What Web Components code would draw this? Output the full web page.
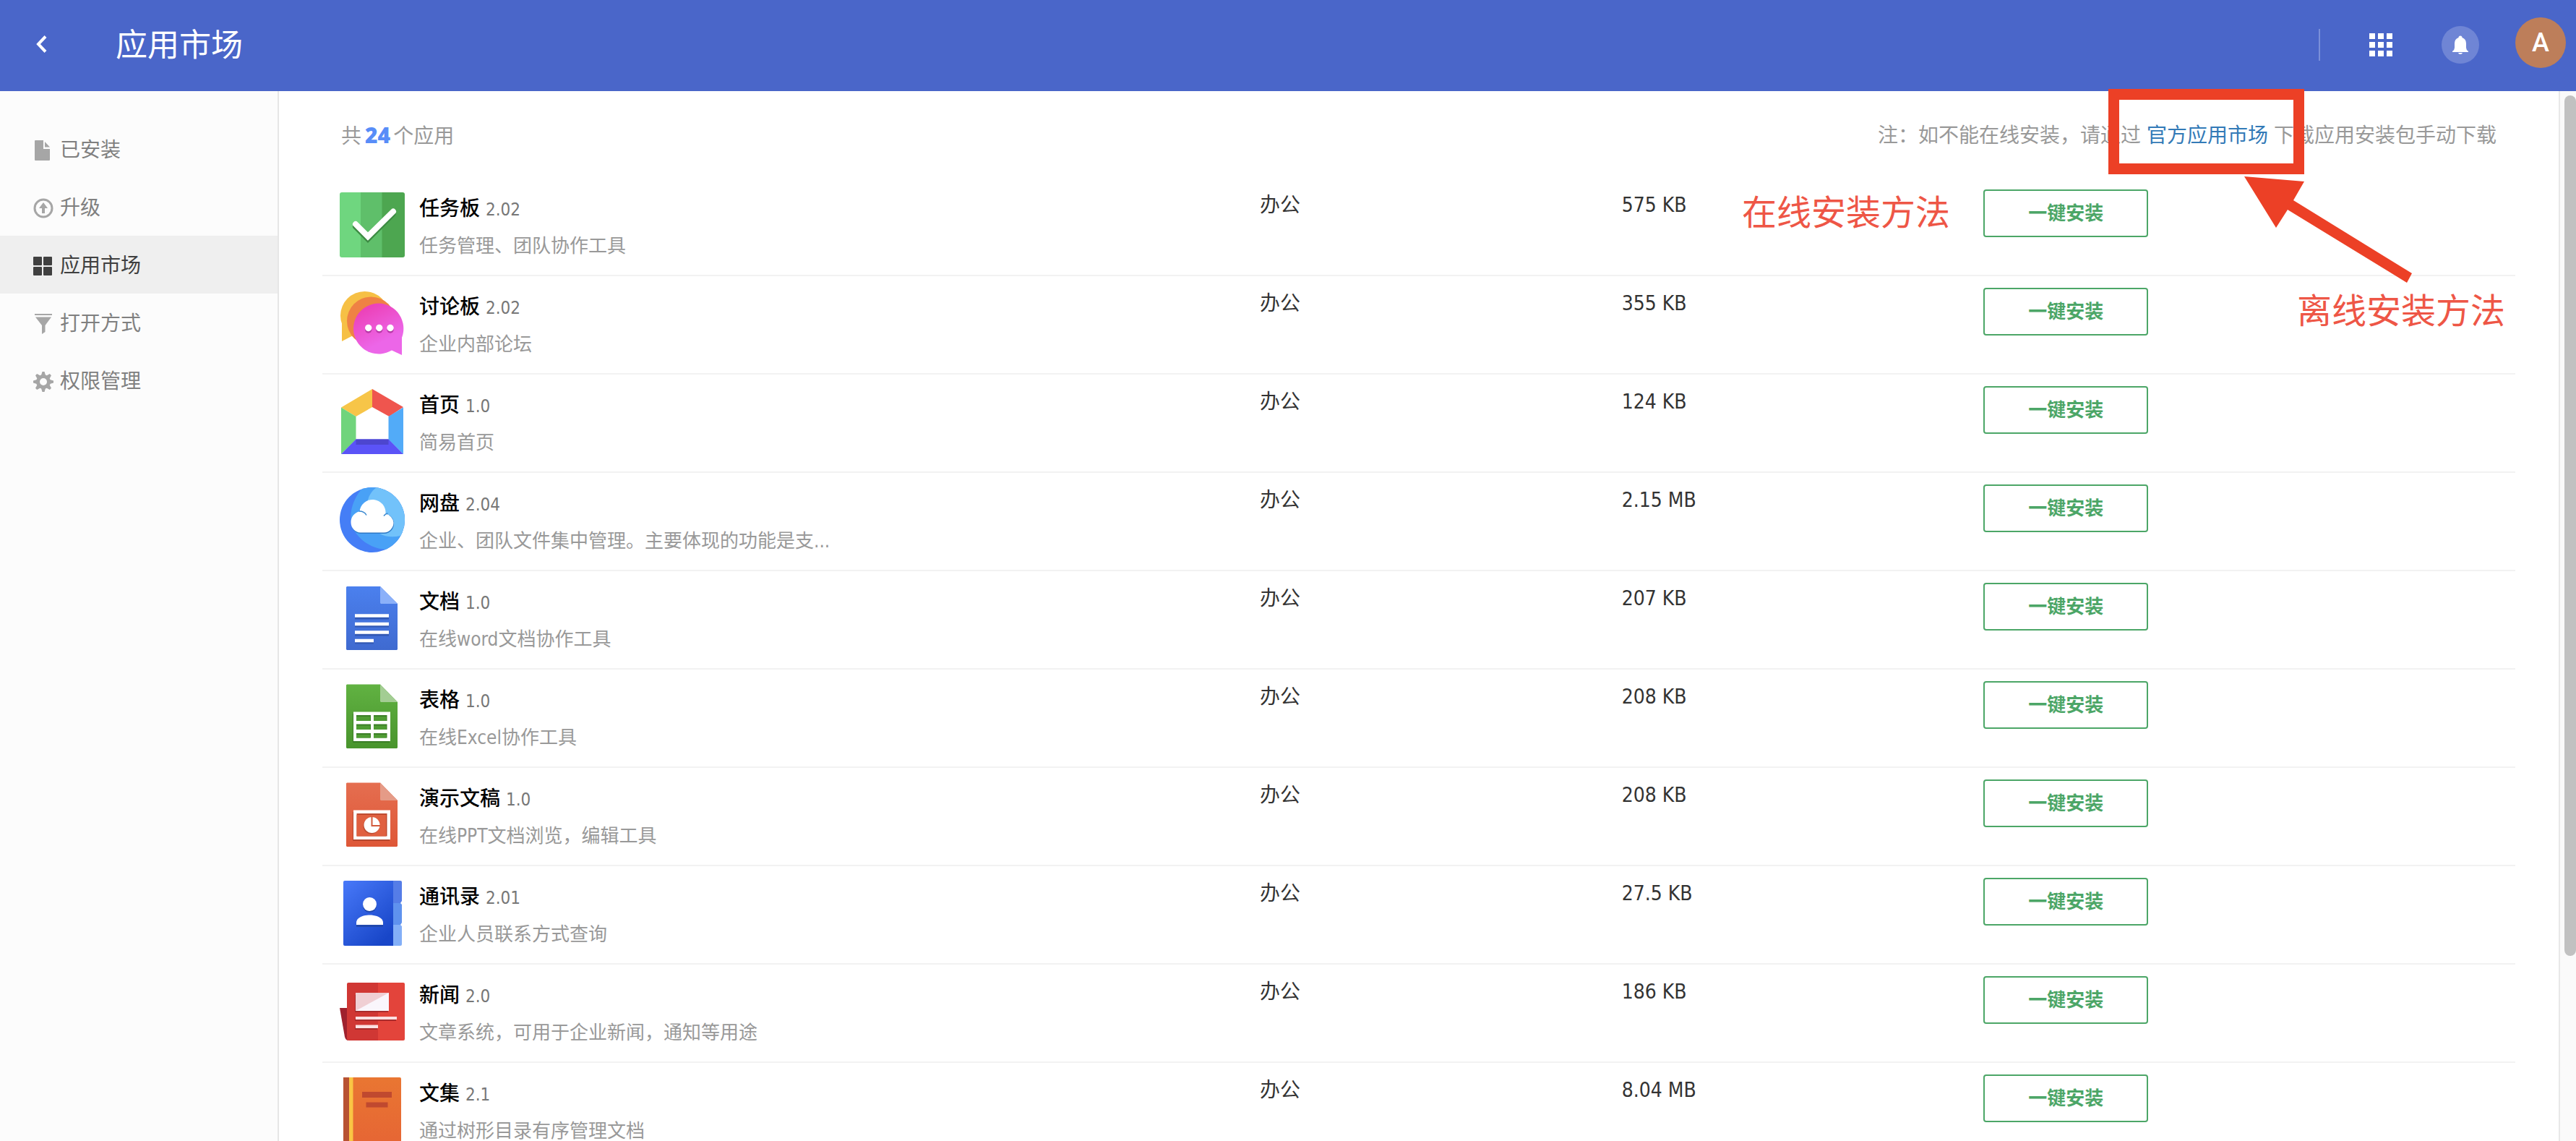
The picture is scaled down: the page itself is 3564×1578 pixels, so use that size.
<!DOCTYPE html>
<html lang="zh-CN">
<head>
<meta charset="utf-8">
<title>应用市场</title>
<style>
  html, body {
    margin: 0;
    height: 100%;
  }
  body {
    font-family: "DejaVu Sans Condensed", "Noto Sans CJK SC", sans-serif;
    font-size: 28px;
    line-height: 40px;
    color: #333;
    background: #fff;
    overflow: hidden;
  }
</style>
</head>
<body>
<market-page>
  <market-header slot="header" heading="应用市场" user="A"></market-header>
  <side-nav slot="nav">
    <side-item icon="file">已安装</side-item>
    <side-item icon="upgrade">升级</side-item>
    <side-item icon="grid" active>应用市场</side-item>
    <side-item icon="filter">打开方式</side-item>
    <side-item icon="gear">权限管理</side-item>
  </side-nav>
  <market-toolbar count="24">
    注：如不能在线安装，请通过 <a href="#market">官方应用市场</a> 下载应用安装包手动下载
  </market-toolbar>
  <app-table></app-table>
  <guide-notes slot="notes"></guide-notes>
</market-page>

<script>
// --- Data ---
const APPS = [
  { icon: 'board', name: '任务板', version: '2.02', desc: '任务管理、团队协作工具', type: '办公', size: '575 KB' },
  { icon: 'forum', name: '讨论板', version: '2.02', desc: '企业内部论坛', type: '办公', size: '355 KB' },
  { icon: 'home', name: '首页', version: '1.0', desc: '简易首页', type: '办公', size: '124 KB' },
  { icon: 'disk', name: '网盘', version: '2.04', desc: '企业、团队文件集中管理。主要体现的功能是支...', type: '办公', size: '2.15 MB' },
  { icon: 'doc', name: '文档', version: '1.0', desc: '在线word文档协作工具', type: '办公', size: '207 KB' },
  { icon: 'sheet', name: '表格', version: '1.0', desc: '在线Excel协作工具', type: '办公', size: '208 KB' },
  { icon: 'slides', name: '演示文稿', version: '1.0', desc: '在线PPT文档浏览，编辑工具', type: '办公', size: '208 KB' },
  { icon: 'contacts', name: '通讯录', version: '2.01', desc: '企业人员联系方式查询', type: '办公', size: '27.5 KB' },
  { icon: 'news', name: '新闻', version: '2.0', desc: '文章系统，可用于企业新闻，通知等用途', type: '办公', size: '186 KB' },
  { icon: 'book', name: '文集', version: '2.1', desc: '通过树形目录有序管理文档', type: '办公', size: '8.04 MB' },
];

// --- App icons, 90 x 90 ---
const APP_ICONS = {
  board: `
    <clipPath id="c"><rect width="90" height="90" rx="3"/></clipPath>
    <g clip-path="url(#c)">
      <rect width="30" height="90" fill="#6fd67f"/>
      <rect x="29" width="30" height="90" fill="#5fbf6a"/>
      <rect x="58.500" width="32" height="90" fill="#4da650"/>
    </g>
    <path d="M21.500 47.500 39 65 74 30" fill="none" stroke="#3c8a42" stroke-width="7" stroke-linecap="round"/>
    <path d="M22 44 39 61 74 26.500" fill="none" stroke="#fff" stroke-width="8" stroke-linecap="round"/>`,
  forum: `
    <linearGradient id="g" x1=".2" y1="0" x2=".7" y2="1">
      <stop offset=".1" stop-color="#ec42b9"/><stop offset=".75" stop-color="#ec66e8"/>
    </linearGradient>
    <circle cx="34.500" cy="34.500" r="33.500" fill="#f6c045"/>
    <path d="M3 70V45L30 40V56z" fill="#f6c045"/>
    <circle cx="43.500" cy="42" r="33.500" fill="#ef8244"/>
    <path d="M54 17.500A35 35 0 0 1 86 65V89L72 82.500A35 35 0 1 1 54 17.500z" fill="url(#g)"/>
    <g fill="#b73aa8"><circle cx="39.700" cy="54" r="4.700"/><circle cx="54.700" cy="54" r="4.700"/><circle cx="70" cy="54" r="4.700"/></g>
    <g fill="#fff"><circle cx="39.700" cy="51.500" r="4.700"/><circle cx="54.700" cy="51.500" r="4.700"/><circle cx="70" cy="51.500" r="4.700"/></g>`,
  home: `
    <path d="M45 0V25L22.500 38 2 25.500z" fill="#f7c548"/>
    <path d="M45 0 88 25 68.500 38 45 25z" fill="#ef554e"/>
    <path d="M2 25.500 22.500 38V70L2 90z" fill="#70d47c"/>
    <path d="M88 25.500 67.500 38V70L88 90z" fill="#52abf8"/>
    <path d="M22.500 69.500H67.500L88 90H2z" fill="#5b53f7"/>
    <path d="M22.500 69.500H67.500V77H22.500z" fill="#4d46cf"/>`,
  disk: `
    <clipPath id="c"><circle cx="45" cy="45" r="45"/></clipPath>
    <g clip-path="url(#c)">
      <rect width="90" height="90" fill="#457ef6"/>
      <path d="M32 0C20 14 14 30 15.500 46 18 66 40 86 66 86L90 90V0z" fill="#49a1f6"/>
      <path d="M51 0C36 10 34 34 42 50 50 66 66 71 84 67L95 60V0z" fill="#72c2fa"/>
    </g>
    <path d="M28.500 64A13.500 14 0 0 1 16 50 14 15 0 0 1 28 36 18 18 0 0 1 63 36.500 14 14 0 0 1 75 50 13.500 14 0 0 1 62 64z" fill="#2d78c6"/>
    <path d="M28.500 62.500A13.500 14 0 0 1 15.500 48.500 14 15 0 0 1 27.500 33.500 18 18 0 0 1 63.500 36.500 14 14 0 0 1 74.500 49 13.500 14 0 0 1 61.500 62.500z" fill="#fff"/>
    <path d="M27 33Q34 33 37 38.500M66.500 36Q63 36.500 61 39.500" fill="none" stroke="#3988cf" stroke-width="1.500"/>`,
  doc: `
    <linearGradient id="g" x2="0" y2="1"><stop stop-color="#4b80ee"/><stop offset="1" stop-color="#3f6ad0"/></linearGradient>
    <path d="M10 1H56L80 25V88L79 89H10L9 88V2z" fill="url(#g)"/>
    <path d="M56 1 80 25H57L56 24z" fill="#8bb0f9"/>
    <path d="M21 45H68M21 56H68M21 68H68M21 79H47" stroke="#3259b4" stroke-width="3"/>
    <path d="M21 41.500H68M21 53H68M21 64.500H68M21 76H47" stroke="#fff" stroke-width="4.500"/>`,
  sheet: `
    <linearGradient id="g" x2="0" y2="1"><stop stop-color="#61b242"/><stop offset="1" stop-color="#48942c"/></linearGradient>
    <path d="M10 .5H56L80 25V88L79 89H10L9 88V1.500z" fill="url(#g)"/>
    <path d="M56 .5 80 25H57L56 24z" fill="#a3cd93"/>
    <path d="M18 41H69V81H18z" fill="#3a7d25"/>
    <path d="M19 38.500H70V79H19z" fill="#fff"/>
    <path d="M23 43H43V51H23zM47 43H65.500V51H47zM23 55.500H43V63H23zM47 55.500H65.500V63H47zM23 68H43V74.500H23zM47 68H65.500V74.500H47z" fill="#3c7f27"/>
    <path d="M23 45H42V51H23zM47 45H64.500V51H47zM23 57.500H42V63H23zM47 57.500H64.500V63H47zM23 70H42V74.500H23zM47 70H64.500V74.500H47z" fill="#4f9c33"/>`,
  slides: `
    <linearGradient id="g" x2="0" y2="1"><stop stop-color="#e56e50"/><stop offset="1" stop-color="#de5737"/></linearGradient>
    <path d="M10 .5H56L80 25V88L79 89H10L9 88V1.500z" fill="url(#g)"/>
    <path d="M56 .5 80 25H57L56 24z" fill="#e59b87"/>
    <path d="M18 41H69V81H18z" fill="#b5472e"/>
    <path d="M19 38.500H70V79H19z" fill="#fff"/>
    <path d="M23.500 43H65.500V74.500H23.500z" fill="#bf4b31"/>
    <path d="M23.500 45H64V74.500H23.500z" fill="#e06040"/>
    <circle cx="43.500" cy="60.500" r="11" fill="#bc4c32"/>
    <circle cx="44.500" cy="59" r="11" fill="#fff"/>
    <path d="M44.500 47V60H56" fill="none" stroke="#d25b3d" stroke-width="2"/>`,
  contacts: `
    <linearGradient id="g" x2=".7" y2="1"><stop stop-color="#4879f9"/><stop offset="1" stop-color="#1846c8"/></linearGradient>
    <path d="M72 0H84Q86 0 86 2V28L84 31H72z" fill="#557de7"/>
    <path d="M72 31H84L86 33V58L84 61H72z" fill="#5f92ee"/>
    <path d="M72 61H84L86 63V88Q86 90 84 90H72z" fill="#83aff7"/>
    <path d="M7 0H74V90H7Q5 90 5 88V2Q5 0 7 0z" fill="url(#g)"/>
    <g fill="#2149ae"><circle cx="41.500" cy="34.500" r="9.500"/><path d="M23 64V60C23 53 33 49 41.500 49S60 53 60 60V64z"/></g>
    <g fill="#fff"><circle cx="41.500" cy="32.500" r="9.500"/><path d="M23 61V58C23 51 33 47.500 41.500 47.500S60 51 60 58V61z"/></g>`,
  news: `
    <path d="M0 40H11V85Q8 84 7 80z" fill="#9f212d"/>
    <path d="M12 5H53V85H12Q10 85 10 83V7Q10 5 12 5z" fill="#d03734"/>
    <path d="M53 5H88Q90 5 90 7V83Q90 85 88 85H53z" fill="#e3443b"/>
    <path d="M21 22H67V46H21zM21 55H78V58H21zM21 66H52V70H21z" fill="#a92b2c"/>
    <path d="M22 19H68V44H22z" fill="#faf6fc"/>
    <path d="M22 19H68L22 44z" fill="#f0cfd4"/>
    <path d="M22 52H79V56H22zM22 63.500H53V68H22z" fill="#fbe0e2"/>`,
  book: `
    <linearGradient id="g" x2="0" y2="1"><stop stop-color="#e97632"/><stop offset="1" stop-color="#e66634"/></linearGradient>
    <path d="M5 0H13V90H5z" fill="#b85232"/>
    <path d="M13 0H19V90H13z" fill="#fac544"/>
    <path d="M18.500 0H83Q85 0 85 2V90H18.500z" fill="url(#g)"/>
    <path d="M31 20H72V28H31zM36.500 34.500H66.500V41.500H36.500z" fill="#c0492f"/>`,
};

// --- Sidebar glyphs, 28 x 28 ---
const gearTeeth = Array.from({ length: 8 }, (_, i) =>
  `<path d="M11 5 12.500 0h3L17 5z" transform="rotate(${i * 45} 14 14)"/>`).join('');

const NAV_ICONS = {
  file: '<path d="M2 1Q2 0 3 0H14V12H23V27Q23 28 22 28H3Q2 28 2 27z"/><path d="M16 2 23 9.500H16z"/>',
  upgrade: '<circle cx="14" cy="14" r="12" fill="none" stroke="currentColor" stroke-width="3"/><path d="M14 6 20 14H16V21H12V14H8z"/>',
  grid: '<rect y="1" width="12" height="12" rx="1"/><rect x="14" y="1" width="12" height="12" rx="1"/><rect y="15" width="12" height="12" rx="1"/><rect x="14" y="15" width="12" height="12" rx="1"/>',
  filter: '<path d="M2 0H26V2H2zM3 4.500H25L16.500 16V25L12 28V16z"/>',
  gear: `<circle cx="14" cy="14" r="7.500" fill="none" stroke="currentColor" stroke-width="5"/>${gearTeeth}`,
};

const define = (name, render) => {
  customElements.define(name, class extends HTMLElement {
    connectedCallback() {
      if (this.shadowRoot) return;
      this.attachShadow({ mode: 'open' }).innerHTML = render(this);
    }
  });
};

// --- Page shell ---
define('market-page', () => `
  <style>
    :host {
      display: flex;
      flex-direction: column;
      height: 100vh;
      position: relative;
      overflow: hidden;
    }
    .body {
      display: flex;
      flex: 1;
      min-height: 0;
    }
    main {
      flex: 1;
      min-width: 0;
      padding: 0 60px;
      overflow: hidden;
    }
    .track {
      box-sizing: border-box;
      width: 24px;
      padding: 6px 0 0 6px;
      border-left: 2px solid #e8e8e8;
      background: #fafafa;
    }
    .thumb {
      height: 82.3%;
      border-radius: 8px;
      background: #c1c1c1;
    }
  </style>
  <slot name="header"></slot>
  <div class="body">
    <slot name="nav"></slot>
    <main><slot></slot></main>
    <div class="track"><div class="thumb"></div></div>
  </div>
  <slot name="notes"></slot>
`);

define('market-header', (el) => `
  <style>
    :host {
      display: block;
      background: #4a66c9;
      color: #fff;
    }
    header {
      display: flex;
      align-items: flex-start;
      box-sizing: border-box;
      height: 126px;
      padding: 24px 14px 0 42px;
    }
    h1 {
      flex: 1;
      margin: 0 0 0 86px;
      font-size: 44px;
      line-height: 78px;
      font-weight: 400;
    }
    button {
      display: flex;
      align-items: center;
      justify-content: center;
      height: 76px;
      padding: 0;
      border: 0;
      background: none;
      color: inherit;
      font: inherit;
    }
    .back { width: 32px; }
    .line {
      width: 2px;
      height: 44px;
      margin: 16px 68px 0 0;
      background: #7a8fd9;
    }
    .bell {
      width: 52px;
      margin: 0 50px 0 68px;
    }
    .avatar {
      width: 70px;
      height: 70px;
      border-radius: 50%;
      background: #bd7e5a;
      font: 500 36px/70px Roboto, "Liberation Sans", sans-serif;
    }
  </style>
  <header>
    <button class="back" aria-label="返回">
      <svg width="32" height="32"><path d="M21 4.500 11 15 21 25.500" fill="none" stroke="#fff" stroke-width="4"/></svg>
    </button>
    <h1>${el.getAttribute('heading')}</h1>
    <div class="line"></div>
    <button aria-label="应用">
      <svg width="32" height="32" fill="#fff"><path d="M0 0h8v8H0zM12 0h8v8h-8zM24 0h8v8h-8zM0 12h8v8H0zM12 12h8v8h-8zM24 12h8v8h-8zM0 24h8v8H0zM12 24h8v8h-8zM24 24h8v8h-8z"/></svg>
    </button>
    <button class="bell" aria-label="消息">
      <svg width="52" height="52" fill="#fff">
        <circle cx="26" cy="26" r="26" fill="#6f85d5"/>
        <path d="M26 13.500Q28.500 13.500 28.500 16 34 18 34 24V30Q34 33 37 35V36H15V35Q18 33 18 30V24Q18 18 23.500 16 23.500 13.500 26 13.500zM23 37H29Q28.500 39 26 39T23 37z"/>
      </svg>
    </button>
    <button class="avatar">${el.getAttribute('user')}</button>
  </header>
`);

// --- Sidebar ---
define('side-nav', () => `
  <style>
    :host {
      display: block;
      flex: none;
      width: 384px;
      padding-top: 40px;
      border-right: 2px solid #e6e6e6;
      background: #fcfcfc;
    }
  </style>
  <nav><slot></slot></nav>
`);

define('side-item', (el) => `
  <style>
    :host { display: block; }
    a {
      display: flex;
      align-items: center;
      gap: 9px;
      box-sizing: border-box;
      height: 80px;
      padding: 4px 0 0 46px;
      color: #808080;
      text-decoration: none;
    }
    svg {
      fill: currentColor;
      color: #a6a6a6;
    }
    :host([active]) a {
      background: #efefef;
      color: #404040;
    }
    :host([active]) svg { color: #404040; }
  </style>
  <a href="#${el.getAttribute('icon')}">
    <svg width="28" height="28" viewBox="0 0 28 28">${NAV_ICONS[el.getAttribute('icon')]}</svg>
    <span><slot></slot></span>
  </a>
`);

// --- Main column ---
define('market-toolbar', (el) => `
  <style>
    :host {
      display: flex;
      align-items: center;
      justify-content: space-between;
      box-sizing: border-box;
      height: 120px;
      padding: 4px 26px 0;
      color: #999;
    }
    b {
      margin: 0 4px 0 5px;
      color: #588df8;
      font-family: "Open Sans", sans-serif;
      font-size: 30px;
      font-weight: 800;
    }
    ::slotted(a) {
      color: #337ab7;
      text-decoration: none;
    }
  </style>
  <div>共<b>${el.getAttribute('count')}</b>个应用</div>
  <div><slot></slot></div>
`);

define('app-icon', (el) => `
  <style>
    :host { display: block; flex: none; }
    svg { display: block; }
  </style>
  <svg width="90" height="90" viewBox="0 0 90 90">${APP_ICONS[el.getAttribute('name')]}</svg>
`);

define('install-button', () => `
  <style>
    :host { display: block; }
    button {
      width: 228px;
      height: 66px;
      padding: 0;
      border: 2px solid #4ca667;
      border-radius: 4px;
      background: #fff;
      color: #4ca667;
      font: inherit;
      font-size: 26px;
      font-weight: 700;
    }
  </style>
  <button><slot></slot></button>
`);

define('app-table', () => `
  <style>
    :host { display: block; }
    table {
      width: 100%;
      table-layout: fixed;
      border-collapse: separate;
      border-spacing: 0;
    }
    .c-app { width: 42.75%; }
    .c-col { width: 16.5%; }
    td {
      box-sizing: border-box;
      height: 136px;
      padding: 16px 0 0;
      border-bottom: 2px solid #f2f2f2;
      line-height: 44px;
      vertical-align: top;
    }
    td:first-child { padding: 20px 24px 0; }
    .app {
      display: flex;
      gap: 20px;
    }
    .title { line-height: 46px; }
    .title b {
      color: #000;
      font-weight: 500;
    }
    .title span {
      margin-left: 8px;
      color: #777;
      font-size: 24px;
    }
    p {
      margin: 10px 0 0;
      color: #999;
      font-size: 26px;
      line-height: 34px;
    }
  </style>
  <table>
    <colgroup><col class="c-app"><col class="c-col"><col class="c-col"><col></colgroup>
    <tbody>
      ${APPS.map((app) => `
        <tr>
          <td>
            <div class="app">
              <app-icon name="${app.icon}"></app-icon>
              <div>
                <div class="title"><b>${app.name}</b><span>${app.version}</span></div>
                <p>${app.desc}</p>
              </div>
            </div>
          </td>
          <td>${app.type}</td>
          <td>${app.size}</td>
          <td><install-button>一键安装</install-button></td>
        </tr>
      `).join('')}
    </tbody>
  </table>
`);

// --- Red guide marks that float over the page ---
define('guide-notes', () => `
  <style>
    :host {
      position: absolute;
      inset: 0;
      pointer-events: none;
      color: #ee5646;
      font-size: 48px;
      line-height: 60px;
    }
    .frame, .arrow, .online, .offline { position: absolute; }
    .frame {
      box-sizing: border-box;
      top: 123px;
      right: 376px;
      width: 271px;
      height: 118px;
      border: 15px solid #ec4026;
    }
    .arrow { top: 244px; right: 226px; }
    .online { top: 264px; right: 866px; }
    .offline { top: 400px; right: 98px; }
  </style>
  <div class="frame"></div>
  <svg class="arrow" width="233" height="148"><path d="M0 0 83 7 68 33 232 134 225 147 60 46 44 71z" fill="#ec4026"/></svg>
  <span class="online">在线安装方法</span>
  <span class="offline">离线安装方法</span>
`);
</script>
</body>
</html>
